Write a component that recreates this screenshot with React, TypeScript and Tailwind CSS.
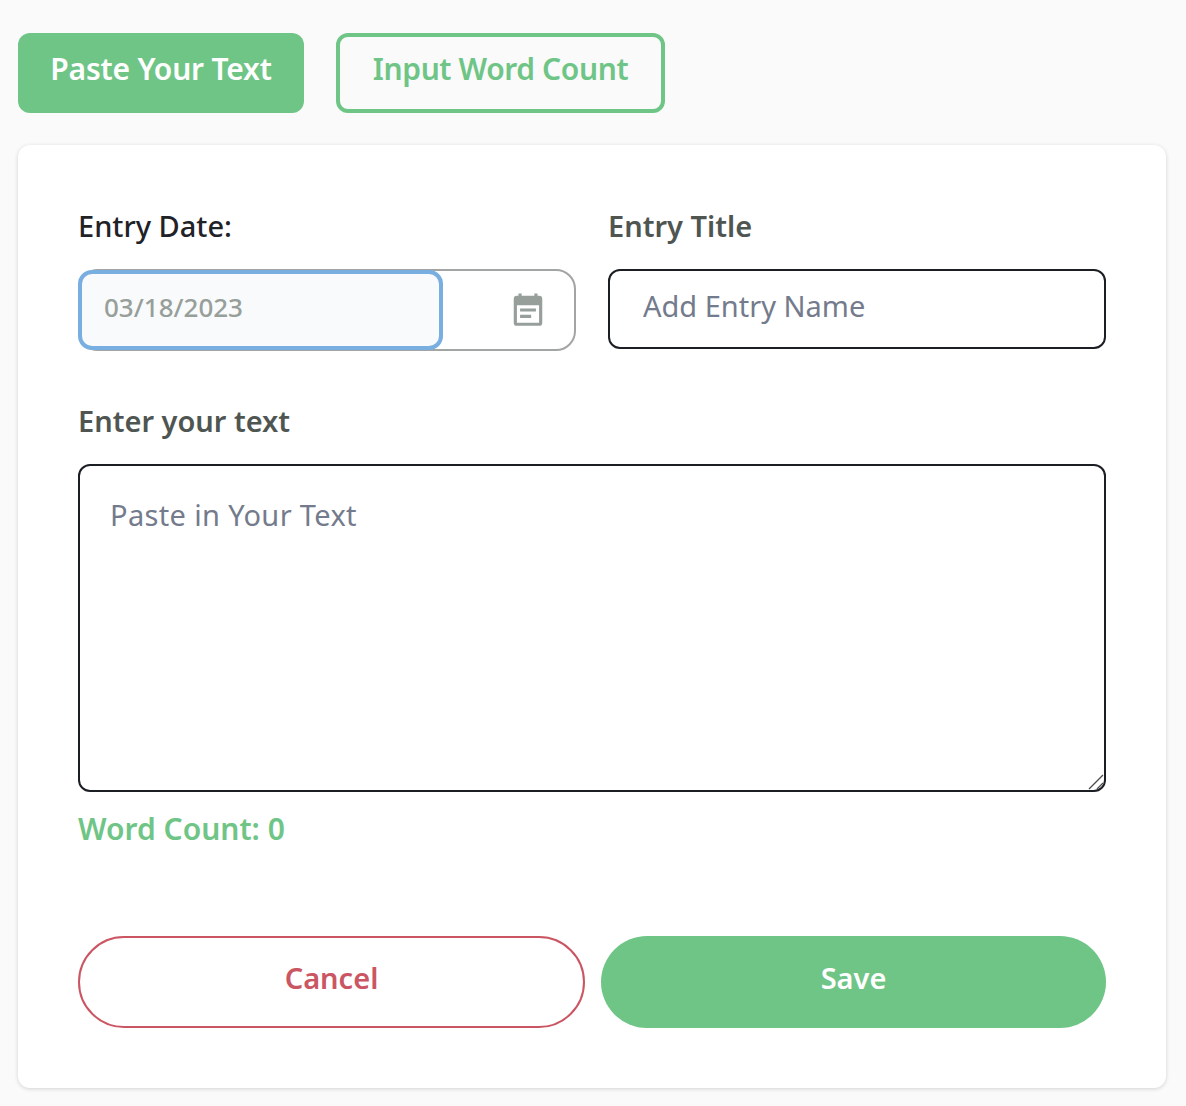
const font = "[font-family:'Noto_Sans',sans-serif]";

export default function App() {
  return (
    <div className={`min-h-[1106px] bg-[#fafafb] px-[18px] pt-[33px] ${font}`}>
      <div className="flex gap-8">
        <button className="flex h-20 w-[286px] items-center justify-center rounded-xl bg-[#6fc586] pb-2.5 text-[30px] font-semibold tracking-[-0.2px] text-white">
          Paste Your Text
        </button>
        <button className="flex h-20 w-[329px] items-center justify-center rounded-xl border-4 border-[#6fc586] pb-2.5 text-[30px] font-semibold tracking-[-0.4px] text-[#6fc586]">
          Input Word Count
        </button>
      </div>

      <div className="mt-8 h-[943px] w-[1148px] rounded-xl bg-white px-[60px] pt-[60px] shadow-[0_1px_4px_rgba(0,0,0,0.16)]">
        <div className="flex gap-8">
          <div className="w-[498px]">
            <label className="block h-[64px] text-[29px] leading-[42px] font-medium text-[#1f2328]">Entry Date:</label>
            <div className="flex h-[82px] items-center justify-between rounded-[20px] border-2 border-[#a3a5a5] pr-[27px]">
              <div className="-ml-0.5 flex h-[80px] w-[365px] items-center rounded-[14px] border-4 border-[#79afe0] bg-[#f9fafb] pb-1.5 pl-[22px] text-[26px] font-medium text-[#979f9a]">
                03/18/2023
              </div>
              <svg width="38" height="38" viewBox="0 0 24 24" fill="#979f9a">
                <path d="M19 3h-1V1.5h-2V3H8V1.5H6V3H5a2 2 0 0 0-2 2v15a2 2 0 0 0 2 2h14a2 2 0 0 0 2-2V5a2 2 0 0 0-2-2zm0 17H5V9h14v11zM7 11h10v2H7v-2zm0 4h7v2H7v-2z" />
              </svg>
            </div>
          </div>
          <div className="w-[498px]">
            <label className="block h-[64px] text-[29px] leading-[42px] font-semibold text-[#4f5652]">Entry Title</label>
            <input
              placeholder="Add Entry Name"
              className="h-20 w-full rounded-xl border-2 border-[#1b1f24] bg-white pb-2 pl-[33px] text-[29px] outline-none placeholder:text-[#737b8c]"
            />
          </div>
        </div>

        <label className="mt-[49px] block h-[64px] text-[29px] leading-[42px] font-semibold text-[#4f5652]">Enter your text</label>
        <div className="relative">
          <textarea
            placeholder="Paste in Your Text"
            className="block h-[328px] w-full resize-none rounded-xl border-2 border-[#1b1f24] bg-white px-[30px] pt-[27px] text-[29px] tracking-[0.35px] outline-none placeholder:text-[#737b8c]"
          />
          <svg className="absolute right-[2px] bottom-[2px]" width="16" height="16" viewBox="0 0 16 16" stroke="#4a4a4a" strokeWidth="1.3">
            <path d="M1 15 15 1M9 15l6-6" />
          </svg>
        </div>
        <p className="mt-[17px] text-[30px] leading-10 font-semibold text-[#6fc586]">Word Count: 0</p>

        <div className="mt-[87px] flex gap-4">
          <button className="h-[92px] w-[507px] rounded-full border-2 border-[#cb5663] bg-white pb-2 text-[29px] font-semibold text-[#cb5663]">
            Cancel
          </button>
          <button className="h-[92px] w-[505px] rounded-full bg-[#6fc586] pb-2 text-[29px] font-semibold text-white">
            Save
          </button>
        </div>
      </div>
    </div>
  );
}
